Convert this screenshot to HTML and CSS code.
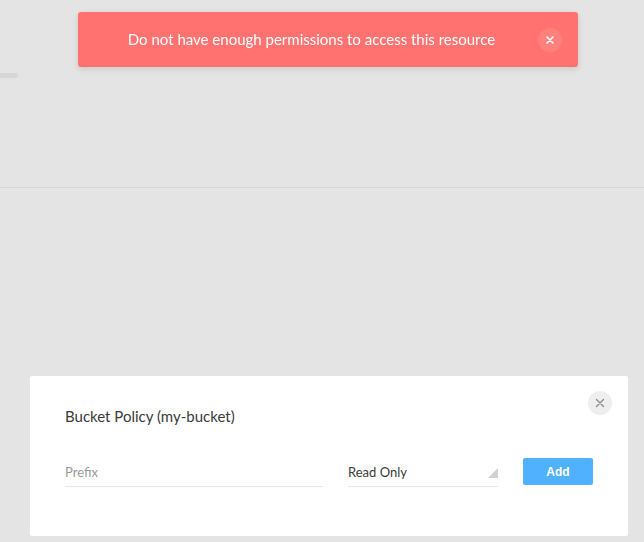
FILE: index.html
```html
<!DOCTYPE html>
<html>
<head>
<meta charset="utf-8">
<link rel="stylesheet" href="styles.css">
</head>
<body>
<div class="alert">
  <span class="alert-text">Do not have enough permissions to access this resource</span>
  <span class="alert-close">
    <svg width="10" height="10" viewBox="0 0 10 10"><path d="M2 2L8 8M8 2L2 8" stroke="#fff" stroke-width="1.6" stroke-linecap="round"/></svg>
  </span>
</div>
<div class="header">
  <div class="header-bar"></div>
</div>
<div class="modal">
  <span class="modal-close">
    <svg width="10" height="10" viewBox="0 0 10 10"><path d="M1.5 1.5L8.5 8.5M8.5 1.5L1.5 8.5" stroke="#8a8a8a" stroke-width="1.3" stroke-linecap="round"/></svg>
  </span>
  <div class="modal-title">Bucket Policy (my-bucket)</div>
  <div class="form-row">
    <div class="field prefix"><span class="placeholder">Prefix</span></div>
    <div class="field select"><span class="value">Read Only</span><span class="caret"></span></div>
    <button class="btn-add">Add</button>
  </div>
</div>
</body>
</html>
```
FILE: styles.css
```css
html, body {
  margin: 0;
  padding: 0;
  background: #e4e4e4;
  font-family: Lato, "Open Sans", sans-serif;
  width: 644px;
  height: 542px;
  overflow: hidden;
}
.alert {
  position: fixed;
  top: 12px;
  left: 78px;
  width: 500px;
  height: 55px;
  background: #ff726f;
  border-radius: 3px;
  box-shadow: 0 2px 6px rgba(0,0,0,0.12);
  display: flex;
  align-items: center;
  justify-content: center;
  padding-right: 33px;
  padding-bottom: 1px;
  box-sizing: border-box;
}
.alert-text {
  color: #fff;
  font-size: 15px;
}
.alert-close {
  position: absolute;
  left: 460px;
  top: 16px;
  width: 24px;
  height: 24px;
  border-radius: 50%;
  background: rgba(255,255,255,0.1);
  display: flex;
  align-items: center;
  justify-content: center;
}
.header {
  border-bottom: 1px solid #d8d8d8;
  padding-top: 73px;
  box-sizing: border-box;
  height: 188px;
}
.header-bar {
  width: 18px;
  height: 5px;
  background: #d6d6d6;
  border-radius: 0 3px 3px 0;
}
.modal {
  position: relative;
  margin: 188px 0 0 30px;
  width: 598px;
  height: 160px;
  background: #fff;
  border-radius: 2px;
  padding: 30px 35px 0;
  box-sizing: border-box;
}
.modal-close {
  position: absolute;
  top: 15px;
  right: 16px;
  width: 24px;
  height: 24px;
  border-radius: 50%;
  background: #eeeeee;
  display: flex;
  align-items: center;
  justify-content: center;
}
.modal-title {
  font-size: 15px;
  line-height: 20px;
  color: #3a3a3a;
}
.form-row {
  margin-top: 30px;
  display: flex;
  align-items: flex-start;
  gap: 25px;
}
.field {
  position: relative;
  height: 31px;
  padding-top: 2px;
  border-bottom: 1px solid #e8e8e8;
  box-sizing: border-box;
  display: flex;
  align-items: center;
  font-size: 13px;
}
.prefix { width: 258px; }
.select { width: 150px; }
.placeholder { color: #999; }
.value { color: #3a3a3a; }
.caret {
  position: absolute;
  right: 0;
  bottom: 8px;
  width: 0;
  height: 0;
  border-style: solid;
  border-width: 0 0 10px 10px;
  border-color: transparent transparent #d2d2d2 transparent;
}
.btn-add {
  margin-top: 2px;
  width: 70px;
  height: 27px;
  border: 0;
  border-radius: 2px;
  background: #50b2ff;
  color: #fff;
  font-family: "Liberation Sans", Arial, sans-serif;
  font-weight: bold;
  font-size: 12px;
  padding: 0;
}
```
